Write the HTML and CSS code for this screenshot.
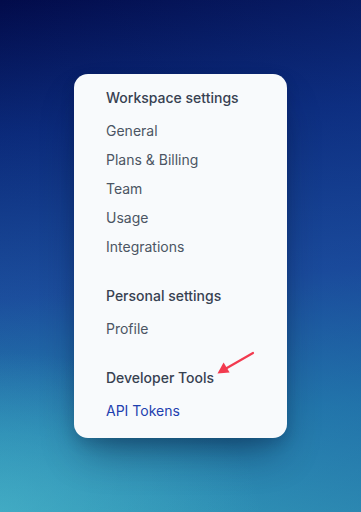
FILE: index.html
```html
<!DOCTYPE html>
<html lang="en">
<head>
<meta charset="utf-8">
<link rel="stylesheet" href="styles.css">
</head>
<body>
<div class="stage">
  <nav class="card">
    <section class="group">
      <h3 class="heading">Workspace settings</h3>
      <ul class="items">
        <li>General</li>
        <li>Plans &amp; Billing</li>
        <li>Team</li>
        <li>Usage</li>
        <li>Integrations</li>
      </ul>
    </section>
    <section class="group">
      <h3 class="heading">Personal settings</h3>
      <ul class="items">
        <li>Profile</li>
      </ul>
    </section>
    <section class="group">
      <h3 class="heading">Developer Tools</h3>
      <ul class="items">
        <li class="active">API Tokens</li>
      </ul>
    </section>
    <svg class="arrow" width="42" height="26" viewBox="0 0 42 26">
      <line x1="39" y1="3" x2="12" y2="18.5" stroke="#f23a4f" stroke-width="2.2" stroke-linecap="round"/>
      <polygon points="3.5,23.5 15.6,22.6 9.6,12.6" fill="#f23a4f"/>
    </svg>
  </nav>
</div>
</body>
</html>
```

FILE: styles.css
```css
html, body {
  margin: 0;
  padding: 0;
}
body {
  width: 361px;
  height: 512px;
  overflow: hidden;
  font-family: Inter, "Noto Sans", sans-serif;
}
.stage {
  width: 361px;
  height: 512px;
  display: flex;
  align-items: center;
  justify-content: center;
  background:
    radial-gradient(ellipse 260px 160px at 0% 100%, rgba(80, 185, 205, 0.55), rgba(80, 185, 205, 0) 100%),
    linear-gradient(100deg, rgba(10,40,120,0) 0%, rgba(20,60,150,0.3) 100%),
    linear-gradient(175deg, #020b4a 0%, #0b2a7a 25%, #1c4f9d 55%, #2789b2 80%, #36a8bd 100%);
}
.card {
  position: relative;
  box-sizing: border-box;
  width: 213px;
  height: 364px;
  background: #f8fafc;
  border-radius: 14px;
  padding: 14px 20px 17px 32px;
  display: flex;
  flex-direction: column;
  gap: 29px;
  box-shadow: 0 22px 40px -10px rgba(0, 20, 50, 0.45), 0 6px 14px rgba(0, 10, 40, 0.15);
}
.group {
  display: flex;
  flex-direction: column;
  gap: 13px;
}
.heading {
  margin: 0;
  font-size: 14px;
  line-height: 20px;
  font-weight: 500;
  color: #374151;
}
.items {
  list-style: none;
  margin: 0;
  padding: 0;
  display: flex;
  flex-direction: column;
  gap: 9px;
}
.items li {
  font-size: 14px;
  line-height: 20px;
  color: #4b5563;
}
.items li.active {
  color: #1e40af;
}
.arrow {
  position: absolute;
  left: 140px;
  top: 276px;
}
```
